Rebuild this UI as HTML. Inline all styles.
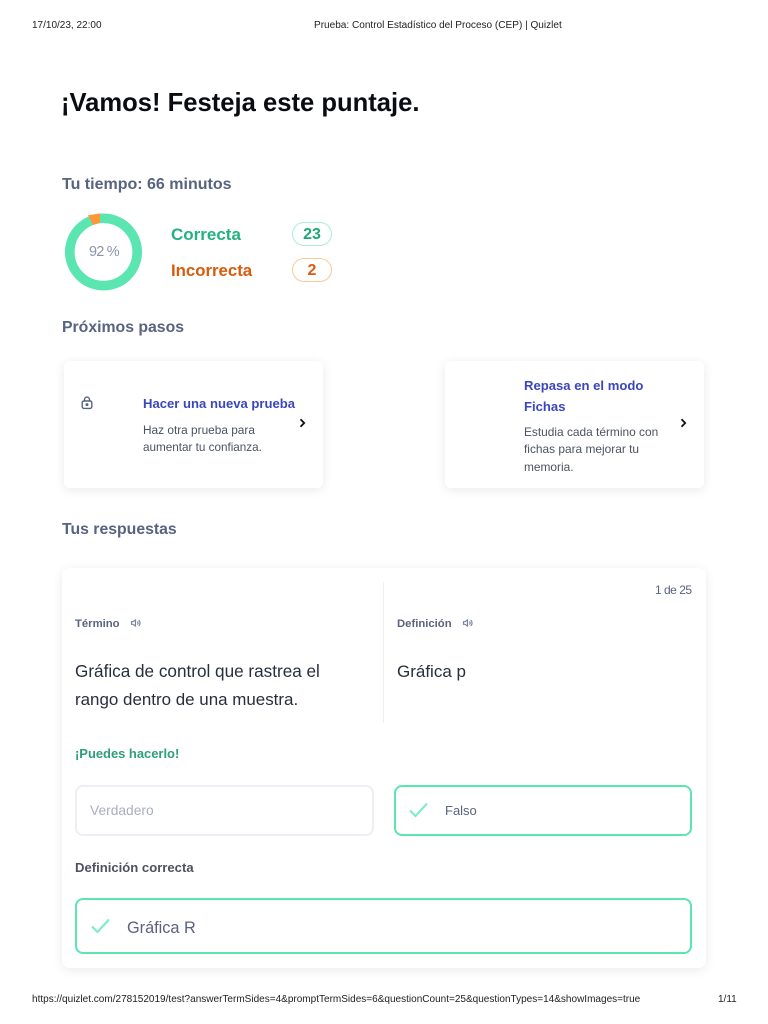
<!DOCTYPE html>
<html lang="es"><head><meta charset="utf-8"><title>Prueba: Control Estadístico del Proceso (CEP) | Quizlet</title>
<style>
html,body{margin:0;padding:0;background:#fff}
#p{position:relative;width:768px;height:1024px;overflow:hidden;background:#fff;font-family:"Liberation Sans",sans-serif}
.t{position:absolute;white-space:nowrap;line-height:1}
.b{font-weight:bold}
.card{position:absolute;background:#fff;border-radius:6px;box-shadow:0 2px 10px rgba(40,46,62,.10)}
.box{position:absolute;box-sizing:border-box;background:#fff;border-radius:8px}
.pill{position:absolute;box-sizing:border-box;background:#fff;border-radius:12px;width:40px;height:24px;text-align:center;font-size:16px;font-weight:bold;line-height:24px}
svg{position:absolute}
</style></head><body><div id="p">
<div class="t" style="left:32px;top:21px;font-size:10px;color:#222">17/10/23, 22:00</div>
<div class="t" style="left:314px;top:21px;font-size:10.05px;color:#222">Prueba: Control Estadístico del Proceso (CEP) | Quizlet</div>
<div class="t b" style="left:61px;top:91px;font-size:25.6px;color:#0a0c12">¡Vamos! Festeja este puntaje.</div>
<div class="t b" style="left:62px;top:177px;font-size:16px;color:#586380">Tu tiempo: 66 minutos</div>
<svg style="left:64px;top:211px" width="80" height="82" viewBox="0 0 80 82"><circle cx="39.5" cy="41" r="33.7" fill="none" stroke="#5be5b0" stroke-width="9.6"/><path d="M24 4.2 L36 2.4 L36 11.7 L29 14 Z" fill="#ff983a"/></svg>
<div class="t" style="left:89px;top:245px;font-size:14.5px;color:#8b93ab;letter-spacing:-.8px">92 %</div>
<div class="t b" style="left:171px;top:226px;font-size:17px;color:#23b27f">Correcta</div>
<div class="t b" style="left:171px;top:263px;font-size:16.8px;color:#d95b0b">Incorrecta</div>
<div class="pill" style="left:292px;top:222px;border:1px solid #a5f0d3;color:#1fa876">23</div>
<div class="pill" style="left:292px;top:258px;border:1px solid #fdc796;color:#d95b0b">2</div>
<div class="t b" style="left:62px;top:320px;font-size:15.8px;color:#586380">Próximos pasos</div>

<div class="card" style="left:64px;top:361px;width:259px;height:127px"></div>
<svg style="left:80px;top:396px" width="14" height="14" viewBox="0 0 14 14" fill="none" stroke="#586380" stroke-width="1.4"><rect x="2.2" y="5" width="9.6" height="7.4" rx="1.6"/><path d="M4.5 5V3.6a2.5 2.5 0 0 1 5 0V5"/><circle cx="7" cy="8.6" r=".8" fill="#586380"/></svg>
<div class="t b" style="left:143px;top:397px;font-size:13.1px;color:#3a46bd">Hacer una nueva prueba</div>
<div class="t" style="left:143px;top:425px;font-size:11.85px;color:#4c5263">Haz otra prueba para</div>
<div class="t" style="left:143px;top:442px;font-size:11.7px;color:#4c5263">aumentar tu confianza.</div>
<svg style="left:298px;top:418px" width="9" height="10" viewBox="0 0 9 10" fill="none" stroke="#111" stroke-width="1.8"><path d="M2.5 1.2 6.2 5 2.5 8.8"/></svg>

<div class="card" style="left:445px;top:361px;width:259px;height:127px"></div>
<div class="t b" style="left:524px;top:379px;font-size:13.1px;color:#3a46bd">Repasa en el modo</div>
<div class="t b" style="left:524px;top:400px;font-size:13.1px;color:#3a46bd">Fichas</div>
<div class="t" style="left:524px;top:427px;font-size:11.9px;color:#4c5263">Estudia cada término con</div>
<div class="t" style="left:524px;top:444px;font-size:11.9px;color:#4c5263">fichas para mejorar tu</div>
<div class="t" style="left:524px;top:462px;font-size:11.9px;color:#4c5263">memoria.</div>
<svg style="left:679px;top:418px" width="9" height="10" viewBox="0 0 9 10" fill="none" stroke="#111" stroke-width="1.8"><path d="M2.5 1.2 6.2 5 2.5 8.8"/></svg>

<div class="t b" style="left:62px;top:522px;font-size:15.8px;color:#586380">Tus respuestas</div>

<div class="card" style="left:62px;top:568px;width:644px;height:400px;border-radius:8px"></div>
<div style="position:absolute;left:383px;top:582px;width:1px;height:141px;background:#edeff4"></div>
<div class="t" style="left:655px;top:584px;font-size:12px;color:#586380;letter-spacing:-.5px">1 de 25</div>
<div class="t b" style="left:75px;top:619px;font-size:11.3px;color:#586380">Término</div>
<svg style="left:130px;top:617px" width="12" height="12" viewBox="0 0 12 12" fill="none" stroke="#7a83a0" stroke-width="1.2"><path d="M1.5 4.7H3L5.5 3v6L3 7.3H1.5Z"/><path d="M7.4 4.4a2.2 2.2 0 0 1 0 3.2M8.8 3a4.2 4.2 0 0 1 0 6"/></svg>
<div class="t b" style="left:397px;top:619px;font-size:11.3px;color:#586380">Definición</div>
<svg style="left:462px;top:617px" width="12" height="12" viewBox="0 0 12 12" fill="none" stroke="#7a83a0" stroke-width="1.2"><path d="M1.5 4.7H3L5.5 3v6L3 7.3H1.5Z"/><path d="M7.4 4.4a2.2 2.2 0 0 1 0 3.2M8.8 3a4.2 4.2 0 0 1 0 6"/></svg>
<div class="t" style="left:75px;top:663px;font-size:17.15px;color:#282e3e">Gráfica de control que rastrea el</div>
<div class="t" style="left:75px;top:692px;font-size:16.95px;color:#282e3e">rango dentro de una muestra.</div>
<div class="t" style="left:397px;top:663px;font-size:17px;color:#282e3e">Gráfica p</div>
<div class="t b" style="left:75px;top:748px;font-size:12.95px;color:#2f9e78">¡Puedes hacerlo!</div>

<div class="box" style="left:75px;top:785px;width:299px;height:51px;border:2px solid #edeff4"></div>
<div class="t" style="left:90px;top:804px;font-size:13.8px;color:#a8afc0">Verdadero</div>
<div class="box" style="left:394px;top:785px;width:298px;height:51px;border:2px solid #5be5b0"></div>
<svg style="left:408px;top:801px" width="22" height="18" viewBox="0 0 22 18" fill="none" stroke="#7eecc4" stroke-width="2.1"><path d="M2 9.5 7.5 15 19 2.5"/></svg>
<div class="t" style="left:445px;top:804px;font-size:13px;color:#586380">Falso</div>
<div class="t b" style="left:75px;top:861px;font-size:13.1px;color:#4c5263">Definición correcta</div>
<div class="box" style="left:75px;top:898px;width:617px;height:56px;border:2px solid #5be5b0"></div>
<svg style="left:90px;top:917px" width="22" height="18" viewBox="0 0 22 18" fill="none" stroke="#7eecc4" stroke-width="2.1"><path d="M2 9.5 7.5 15 19 2.5"/></svg>
<div class="t" style="left:127px;top:920px;font-size:16.3px;color:#586380">Gráfica R</div>

<div class="t" style="left:32px;top:995px;font-size:10.03px;color:#222">https://quizlet.com/278152019/test?answerTermSides=4&amp;promptTermSides=6&amp;questionCount=25&amp;questionTypes=14&amp;showImages=true</div>
<div class="t" style="left:718px;top:995px;font-size:10px;color:#222">1/11</div>
</div></body></html>
